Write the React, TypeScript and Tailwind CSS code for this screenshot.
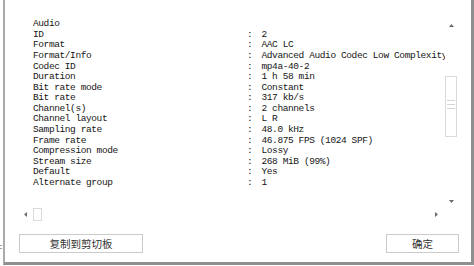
import React from "react";

const rows: [string, string][] = [
  ["ID", "2"],
  ["Format", "AAC LC"],
  ["Format/Info", "Advanced Audio Codec Low Complexity"],
  ["Codec ID", "mp4a-40-2"],
  ["Duration", "1 h 58 min"],
  ["Bit rate mode", "Constant"],
  ["Bit rate", "317 kb/s"],
  ["Channel(s)", "2 channels"],
  ["Channel layout", "L R"],
  ["Sampling rate", "48.0 kHz"],
  ["Frame rate", "46.875 FPS (1024 SPF)"],
  ["Compression mode", "Lossy"],
  ["Stream size", "268 MiB (99%)"],
  ["Default", "Yes"],
  ["Alternate group", "1"],
];

const mono = { fontFamily: '"Liberation Mono", "DejaVu Sans Mono", monospace' };
const cjk = { fontFamily: '"Noto Sans CJK SC", "Noto Sans", sans-serif' };

function Tri({ dir }: { dir: "up" | "down" | "left" | "right" }) {
  const pts =
    dir === "up"
      ? "0,3 5,3 2.5,0"
      : dir === "down"
      ? "0,0 5,0 2.5,3"
      : dir === "left"
      ? "3,0 3,5 0,2.5"
      : "0,0 0,5 3,2.5";
  const w = dir === "up" || dir === "down" ? 5 : 3;
  const h = dir === "up" || dir === "down" ? 3 : 5;
  return (
    <svg width={w} height={h} viewBox={`0 0 ${w} ${h}`} className="block shrink-0">
      <polygon points={pts} fill="#6a6a6a" />
    </svg>
  );
}

export default function App() {
  return (
    <div className="w-[474px] h-[266px] bg-white flex overflow-hidden">
      <div className="w-[3px] shrink-0 flex flex-col pt-[245px] gap-[2px]">
        <div className="w-[2px] h-[1px] bg-[#9a9a9a]" />
        <div className="w-[2px] h-[1px] bg-[#9a9a9a]" />
      </div>
      <div className="w-[471px] h-[265px] shrink-0 border-l-2 border-r-[3px] border-b-[3px] border-l-[#ababab] border-r-[#8f8f8f] border-b-[#8f8f8f] flex flex-col">
        {/* memo */}
        <div className="ml-[14px] mt-[17px] w-[441px] flex flex-col">
          <div className="flex h-[190px]">
            <div
              className="w-[426px] shrink-0 overflow-hidden pl-[14px] pt-[2.2px] text-[9.5px] tracking-[-0.4px] text-[#151515] whitespace-pre"
              style={mono}
            >
              <div className="h-[10.58px] leading-[10.58px]">Audio</div>
              {rows.map(([k, v]) => (
                <div key={k} className="flex h-[10.58px] leading-[10.58px]">
                  <span className="w-[214px] shrink-0">{k}</span>
                  <span className="w-[14.5px] shrink-0">:</span>
                  <span className="shrink-0">{v}</span>
                </div>
              ))}
            </div>
            <div className="w-[15px] shrink-0 flex flex-col items-start">
              <div className="ml-[4px] mt-[7px]">
                <Tri dir="up" />
              </div>
              <div className="mt-[49px] w-[12px] h-[61px] border border-[#dadada] bg-white flex flex-col items-center pt-[23px] gap-[3px]">
                <div className="w-[8px] h-[1px] bg-[#d4d4d4]" />
                <div className="w-[8px] h-[1px] bg-[#d4d4d4]" />
                <div className="w-[8px] h-[1px] bg-[#d4d4d4]" />
              </div>
              <div className="ml-[4px] mt-[63px]">
                <Tri dir="down" />
              </div>
            </div>
          </div>
          <div className="flex h-[15px] items-center">
            <div className="ml-[5px]">
              <Tri dir="left" />
            </div>
            <div className="ml-[6px] w-[9px] h-[13px] border border-[#dadada] bg-white" />
            <div className="flex-1" />
            <div className="mr-[22px]">
              <Tri dir="right" />
            </div>
          </div>
        </div>
        {/* buttons */}
        <div className="mt-[12px] pl-[14px] pr-[12px] flex justify-between">
          <div
            className="w-[124px] h-[19px] border border-[#cacaca] bg-white flex items-center justify-center text-[10.5px] text-[#333]"
            style={cjk}
          >
            复制到剪切板
          </div>
          <div
            className="w-[73px] h-[19px] border border-[#cacaca] bg-white flex items-center justify-center text-[10.5px] text-[#333]"
            style={cjk}
          >
            确定
          </div>
        </div>
      </div>
    </div>
  );
}
